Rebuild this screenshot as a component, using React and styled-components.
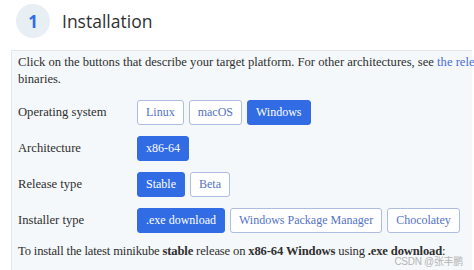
import React from 'react';
import styled, { createGlobalStyle } from 'styled-components';

const COLOR = {
    text: '#2f2f2f',
    blue: '#326ce5',
    link: '#4a6fd3',
    panel: '#f4f8fa',
    panelBorder: '#e1e7eb',
    outline: '#aebbe2',
    outlineText: '#5473c4',
    circle: '#e7eef4'
};

const Global = createGlobalStyle`
    html, body {
        margin: 0;
        padding: 0;
        background: #ffffff;
        overflow: hidden;
    }
`;

const Root = styled.div`
    width: 474px;
    height: 270px;
    position: relative;
    overflow: hidden;
`;

const Header = styled.div`
    display: flex;
    align-items: center;
    gap: 12px;
    padding: 4px 0 0 16px;
    height: 34px;
`;

const StepBadge = styled.div`
    width: 34px;
    height: 34px;
    border-radius: 50%;
    background: ${COLOR.circle};
    color: ${COLOR.blue};
    display: flex;
    align-items: center;
    justify-content: center;
    font-family: "Open Sans", "Liberation Sans", sans-serif;
    font-weight: 700;
    font-size: 17px;
`;

const Title = styled.h2`
    margin: 0;
    font-family: "Open Sans", "Liberation Sans", sans-serif;
    font-weight: 400;
    font-size: 17.5px;
    color: #303030;
`;

const Panel = styled.div`
    margin: 12px 2px 0 11px;
    background: ${COLOR.panel};
    border-top: 1px solid ${COLOR.panelBorder};
    border-left: 1px solid ${COLOR.panelBorder};
    padding: 3px 0 20px 6px;
    font-family: "Liberation Serif", serif;
    font-size: 12.6px;
    line-height: 17px;
    color: ${COLOR.text};
`;

const Intro = styled.p`
    margin: 0;
    white-space: nowrap;
`;

const Link = styled.a`
    color: ${COLOR.link};
    text-decoration: none;
`;

const Options = styled.div`
    display: flex;
    flex-direction: column;
    gap: 11px;
    margin-top: 12px;
`;

const Row = styled.div`
    display: flex;
    align-items: center;
    height: 25px;
`;

const Label = styled.div`
    width: 119px;
    flex-shrink: 0;
`;

const Buttons = styled.div`
    display: flex;
    gap: 5px;
`;

const Choice = styled.button`
    height: 25px;
    padding: 0 8px;
    border-radius: 3px;
    border: 1px solid ${(p) => (p.$active ? COLOR.blue : COLOR.outline)};
    background: ${(p) => (p.$active ? COLOR.blue : '#ffffff')};
    color: ${(p) => (p.$active ? '#ffffff' : COLOR.outlineText)};
    font-family: "Liberation Serif", serif;
    font-size: 12px;
    line-height: 23px;
    white-space: nowrap;
    cursor: pointer;
`;

const Summary = styled.p`
    margin: 10px 0 0;
    white-space: nowrap;
    letter-spacing: -0.15px;
`;

const Watermark = styled.div`
    position: absolute;
    right: 11px;
    bottom: 2px;
    font-family: "Liberation Sans", "Noto Sans CJK SC", sans-serif;
    font-size: 10px;
    color: #b4b4b4;
    letter-spacing: -0.3px;
`;

const rows = [
    { label: 'Operating system', options: ['Linux', 'macOS', 'Windows'], active: 'Windows' },
    { label: 'Architecture', options: ['x86-64'], active: 'x86-64' },
    { label: 'Release type', options: ['Stable', 'Beta'], active: 'Stable' },
    { label: 'Installer type', options: ['.exe download', 'Windows Package Manager', 'Chocolatey'], active: '.exe download' }
];

const App = () => {
    return (
        <Root>
            <Global />
            <Header>
                <StepBadge>1</StepBadge>
                <Title>Installation</Title>
            </Header>
            <Panel>
                <Intro>
                    Click on the buttons that describe your target platform. For other architectures, see{' '}
                    <Link href="#">the releases page</Link> for other
                    <br />
                    binaries.
                </Intro>
                <Options>
                    {rows.map((row) => (
                        <Row key={row.label}>
                            <Label>{row.label}</Label>
                            <Buttons>
                                {row.options.map((opt) => (
                                    <Choice key={opt} $active={opt === row.active}>{opt}</Choice>
                                ))}
                            </Buttons>
                        </Row>
                    ))}
                </Options>
                <Summary>
                    To install the latest minikube <b>stable</b> release on <b>x86-64</b> <b>Windows</b> using <b>.exe download</b>:
                </Summary>
            </Panel>
            <Watermark>CSDN @张丰鹏</Watermark>
        </Root>
    );
};

export default App;
